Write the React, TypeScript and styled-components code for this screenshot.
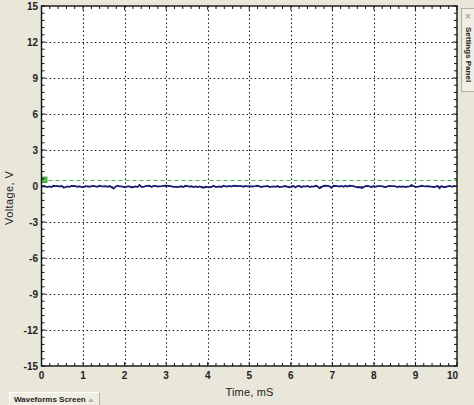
import React from "react";
import styled, { createGlobalStyle } from "styled-components";

const GlobalStyle = createGlobalStyle`
  html, body {
    margin: 0;
    padding: 0;
    background: #e9e7da;
    overflow: hidden;
  }
`;

const Workspace = styled.div`
  position: relative;
  width: 474px;
  height: 405px;
  display: grid;
  grid-template-columns: 461px 13px;
  background: #e9e7da;
  font-family: "Liberation Sans", Arial, sans-serif;
  color: #1a1a1a;
`;

const ChartPanel = styled.div`
  display: grid;
  grid-template-columns: 18px 443px;
  grid-template-rows: 383px 22px;
`;

const YTitle = styled.div`
  display: flex;
  align-items: center;
  justify-content: center;
  padding-bottom: 12px;
  writing-mode: vertical-rl;
  transform: rotate(180deg);
  font-size: 11px;
  letter-spacing: 0.4px;
  color: #222;
`;

const XTitle = styled.div`
  grid-column: 2;
  padding: 3px 0 0 20px;
  text-align: center;
  font-size: 11px;
  line-height: 12px;
  letter-spacing: 0.2px;
  color: #222;
`;

const SideStrip = styled.div`
  display: flex;
  flex-direction: column;
  padding-top: 8px;
`;

const SideTab = styled.div`
  height: 84px;
  display: flex;
  flex-direction: column;
  align-items: center;
  gap: 6px;
  padding-top: 2px;
  box-sizing: border-box;
  background: #f1efe4;
  border: 1px solid #b4b2a4;
  border-right: none;
`;

const CloseMark = styled.span`
  font-size: 11px;
  line-height: 10px;
  color: #8f8f88;
`;

const SideLabel = styled.span`
  writing-mode: vertical-rl;
  font-size: 8px;
  font-weight: bold;
  color: #222;
  white-space: nowrap;
`;

const DockTab = styled.div`
  position: absolute;
  left: 9px;
  bottom: 0;
  width: 91px;
  height: 13px;
  box-sizing: border-box;
  display: flex;
  align-items: center;
  justify-content: space-between;
  padding: 1px 5px 0 4px;
  background: #f0eee3;
  border-top: 1px solid #ffffff;
  border-left: 1px solid #ffffff;
  border-right: 1px solid #b4b2a4;
  font-size: 8px;
  font-weight: bold;
  color: #1e1e1e;
`;

const Arrow = styled.span`
  width: 0;
  height: 0;
  border-left: 3px solid transparent;
  border-right: 3px solid transparent;
  border-bottom: 4px solid #b8b8b0;
`;

const X0 = 23.5;
const PW = 415.5;
const Y0 = 6;
const PH = 360;
const XDIV = 10;
const YDIV = 10;

// deterministic noisy trace around 0 V
function makeWave(): string {
  let seed = 7;
  const rnd = () => {
    seed = (seed * 9301 + 49297) % 233280;
    return seed / 233280;
  };
  const pts: string[] = [];
  for (let x = X0; x <= X0 + PW; x += 2) {
    const spike = rnd() > 0.85 ? (rnd() - 0.5) * 3.5 : 0;
    const y = Y0 + PH / 2 + 0.5 + (rnd() - 0.5) * 1.6 + spike;
    pts.push(`${x.toFixed(1)},${y.toFixed(1)}`);
  }
  return pts.join(" ");
}

const wave = makeWave();

const Plot: React.FC = () => {
  const dx = PW / XDIV;
  const dy = PH / YDIV;
  const ticks: React.ReactNode[] = [];
  for (let i = 0; i <= XDIV * 5; i++) {
    const x = X0 + (i * dx) / 5;
    const len = i % 5 === 0 ? 4 : 3;
    ticks.push(<line key={`tb${i}`} x1={x} y1={Y0 + PH} x2={x} y2={Y0 + PH - len} />);
    ticks.push(<line key={`tt${i}`} x1={x} y1={Y0} x2={x} y2={Y0 + len} />);
  }
  for (let i = 0; i <= YDIV * 5; i++) {
    const y = Y0 + (i * dy) / 5;
    const len = i % 5 === 0 ? 4 : 3;
    ticks.push(<line key={`tl${i}`} x1={X0} y1={y} x2={X0 + len} y2={y} />);
    ticks.push(<line key={`tr${i}`} x1={X0 + PW} y1={y} x2={X0 + PW - len} y2={y} />);
  }

  return (
    <svg width={443} height={383} viewBox="0 0 443 383">
      <rect x={X0} y={Y0} width={PW} height={PH} fill="#ffffff" />
      <g stroke="#1e1e1e" strokeWidth={1.1} strokeDasharray="1.5 2.6">
        {Array.from({ length: XDIV - 1 }, (_, i) => {
          const x = Math.round(X0 + (i + 1) * dx) + 0.5;
          return <line key={`gx${i}`} x1={x} y1={Y0} x2={x} y2={Y0 + PH} />;
        })}
        {Array.from({ length: YDIV - 1 }, (_, i) => {
          const y = Y0 + (i + 1) * dy + 0.5;
          return <line key={`gy${i}`} x1={X0} y1={y} x2={X0 + PW} y2={y} />;
        })}
      </g>
      <line
        x1={X0}
        y1={180.5}
        x2={X0 + PW}
        y2={180.5}
        stroke="#3fb53f"
        strokeWidth={1}
        strokeDasharray="4 3"
      />
      <polyline points={wave} fill="none" stroke="#1b1b72" strokeWidth={1.8} />
      <rect x={X0} y={177} width={5.5} height={5.5} fill="#53c253" stroke="#2f9a2f" strokeWidth={0.8} />
      <g stroke="#111" strokeWidth={1}>{ticks}</g>
      <rect x={X0} y={Y0} width={PW} height={PH} fill="none" stroke="#111" strokeWidth={1.4} />
      <g fontFamily="Liberation Sans, Arial, sans-serif" fontSize={10} fontWeight="bold" fill="#222">
        {Array.from({ length: YDIV + 1 }, (_, i) => (
          <text key={`ly${i}`} x={20} y={Y0 + i * dy + 3.6} textAnchor="end">
            {15 - i * 3}
          </text>
        ))}
        {Array.from({ length: XDIV + 1 }, (_, i) => (
          <text
            key={`lx${i}`}
            x={i === XDIV ? X0 + PW + 1 : X0 + i * dx}
            y={378.5}
            textAnchor={i === XDIV ? "end" : "middle"}
          >
            {i}
          </text>
        ))}
      </g>
    </svg>
  );
};

export default function App() {
  return (
    <>
      <GlobalStyle />
      <Workspace>
        <ChartPanel>
          <YTitle>Voltage, V</YTitle>
          <Plot />
          <XTitle>Time, mS</XTitle>
        </ChartPanel>
        <SideStrip>
          <SideTab>
            <CloseMark>×</CloseMark>
            <SideLabel>Settings Panel</SideLabel>
          </SideTab>
        </SideStrip>
        <DockTab>
          <span>Waveforms Screen</span>
          <Arrow />
        </DockTab>
      </Workspace>
    </>
  );
}
